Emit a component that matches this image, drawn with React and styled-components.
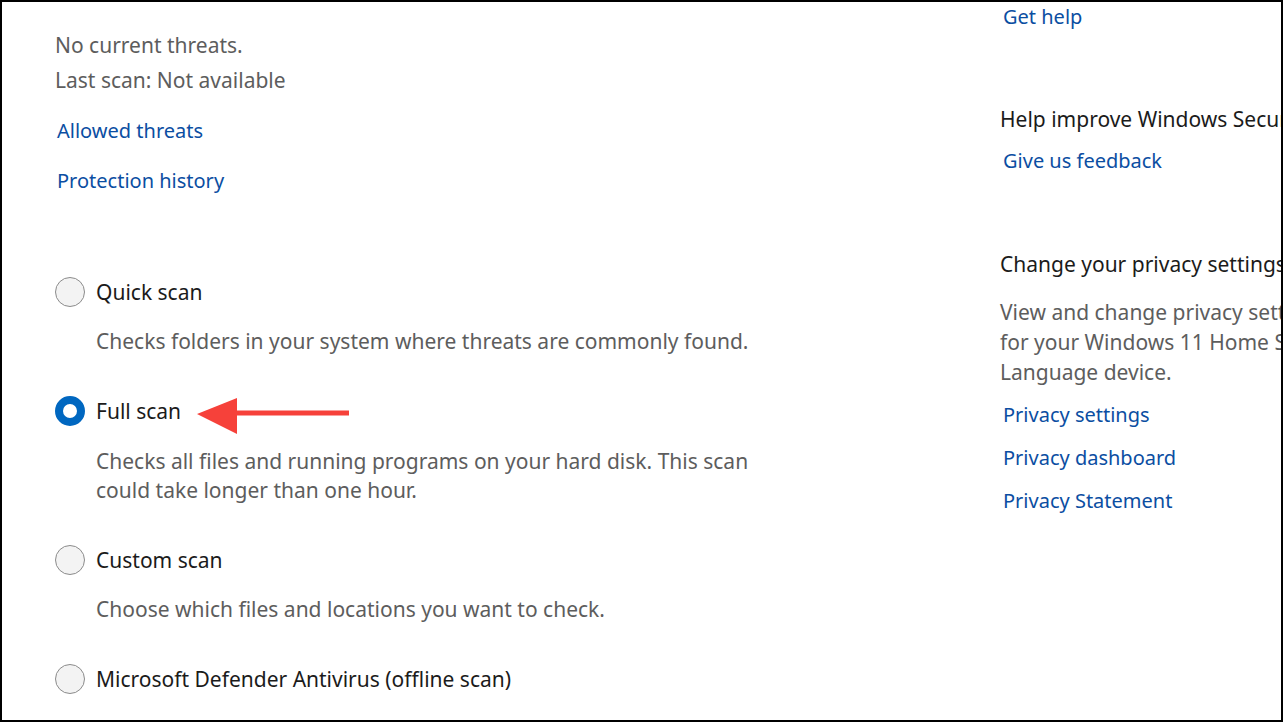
import styled, { createGlobalStyle } from 'styled-components';

const GlobalStyle = createGlobalStyle`
  html, body {
    margin: 0;
    padding: 0;
    background: #ffffff;
  }
  body {
    font-family: 'Segoe UI', 'Noto Sans', 'Open Sans', sans-serif;
  }
`;

const Frame = styled.div`
  position: relative;
  width: 1283px;
  height: 722px;
  box-sizing: border-box;
  border: 2px solid #000;
  overflow: hidden;
  background: #fff;
  display: grid;
  grid-template-columns: 998px 400px;
`;

const LeftColumn = styled.div`
  padding: 26px 0 0 53px;
  display: flex;
  flex-direction: column;
`;

const RightColumn = styled.div`
  display: flex;
  flex-direction: column;
  white-space: nowrap;
`;

const StatusText = styled.div`
  font-size: 21px;
  line-height: 35px;
  color: #5d5d5d;
`;

const LinkText = styled.a`
  display: block;
  font-size: 20px;
  line-height: ${({ $lh }) => $lh || 50}px;
  color: #0b4ea2;
  text-decoration: none;
  padding-left: ${({ $pl }) => $pl ?? 3}px;
  margin-top: ${({ $mt }) => $mt || 0}px;
  cursor: pointer;
`;

const ScanList = styled.div`
  margin-top: 71px;
  display: flex;
  flex-direction: column;
`;

const Option = styled.div`
  display: flex;
  flex-direction: column;
  margin-bottom: 40px;
`;

const OptionRow = styled.label`
  display: flex;
  align-items: center;
  gap: 11px;
  height: 30px;
  cursor: pointer;
`;

const Radio = styled.span`
  width: 30px;
  height: 30px;
  box-sizing: border-box;
  border-radius: 50%;
  flex-shrink: 0;
  background: ${({ $checked }) => ($checked ? '#fff' : '#f3f3f3')};
  border: ${({ $checked }) => ($checked ? '8.5px solid #0067c0' : '1.5px solid #8b8b8b')};
`;

const OptionLabel = styled.span`
  font-size: 21px;
  line-height: 30px;
  color: #1b1b1b;
`;

const OptionDesc = styled.div`
  margin-top: ${({ $mt }) => $mt || 20}px;
  padding-left: 41px;
  font-size: 21px;
  line-height: 29px;
  color: #5d5d5d;
  max-width: 690px;
`;

const Heading = styled.div`
  font-size: 21px;
  line-height: 30px;
  color: #1b1b1b;
  margin-top: ${({ $mt }) => $mt || 0}px;
`;

const SideText = styled.div`
  font-size: 21px;
  line-height: 30px;
  color: #5d5d5d;
  margin-top: 18px;
  margin-bottom: 6px;
`;

const Arrow = styled.svg`
  position: absolute;
  left: 191px;
  top: 392px;
`;

const options = [
  { label: 'Quick scan', desc: 'Checks folders in your system where threats are commonly found.' },
  {
    label: 'Full scan',
    checked: true,
    desc: 'Checks all files and running programs on your hard disk. This scan could take longer than one hour.',
    mt: 21,
  },
  { label: 'Custom scan', desc: 'Choose which files and locations you want to check.' },
  { label: 'Microsoft Defender Antivirus (offline scan)' },
];

export default function App() {
  return (
    <>
      <GlobalStyle />
      <Frame>
        <LeftColumn>
          <StatusText>No current threats.</StatusText>
          <StatusText>Last scan: Not available</StatusText>
          <LinkText $mt={8} $pl={2}>Allowed threats</LinkText>
          <LinkText $pl={2}>Protection history</LinkText>
          <ScanList>
            {options.map((o) => (
              <Option key={o.label}>
                <OptionRow>
                  <Radio $checked={o.checked} />
                  <OptionLabel>{o.label}</OptionLabel>
                </OptionRow>
                {o.desc && <OptionDesc $mt={o.mt}>{o.desc}</OptionDesc>}
              </Option>
            ))}
          </ScanList>
        </LeftColumn>
        <RightColumn>
          <LinkText $lh={30}>Get help</LinkText>
          <Heading $mt={72}>Help improve Windows Security</Heading>
          <LinkText $lh={30} $mt={12}>Give us feedback</LinkText>
          <Heading $mt={73}>Change your privacy settings</Heading>
          <SideText>
            View and change privacy settings
            <br />
            for your Windows 11 Home Single
            <br />
            Language device.
          </SideText>
          <LinkText $lh={43}>Privacy settings</LinkText>
          <LinkText $lh={43}>Privacy dashboard</LinkText>
          <LinkText $lh={43}>Privacy Statement</LinkText>
        </RightColumn>
        <Arrow width="160" height="44" viewBox="0 0 160 44">
          <path d="M4 20 L44 4 L44 16.5 L156 16.5 L156 21.5 L44 21.5 L44 40 Z" fill="#f6413a" />
        </Arrow>
      </Frame>
    </>
  );
}
